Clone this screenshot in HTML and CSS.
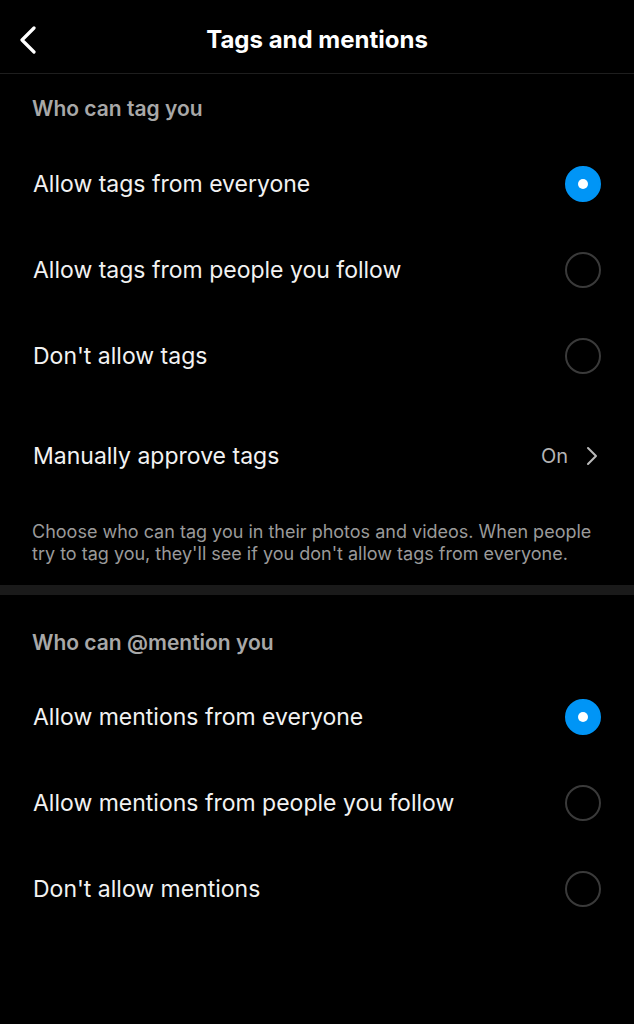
FILE: index.html
```html
<!DOCTYPE html>
<html>
<head>
<meta charset="utf-8">
<link rel="stylesheet" href="styles.css">
</head>
<body>
<div class="header">
  <svg class="back" width="20" height="28" viewBox="0 0 20 28"><path d="M16 2 L4 14 L16 26" fill="none" stroke="#fff" stroke-width="3.2" stroke-linecap="round" stroke-linejoin="round"/></svg>
  <div class="title">Tags and mentions</div>
</div>

<div class="section-title first">Who can tag you</div>
<div class="row"><span class="label">Allow tags from everyone</span><span class="radio on"></span></div>
<div class="row"><span class="label">Allow tags from people you follow</span><span class="radio"></span></div>
<div class="row"><span class="label">Don't allow tags</span><span class="radio"></span></div>
<div class="row manual"><span class="label">Manually approve tags</span><span class="value">On<svg class="chev" width="12" height="20" viewBox="0 0 12 20"><path d="M2 2 L10 10 L2 18" fill="none" stroke="#bbb" stroke-width="2" stroke-linecap="round" stroke-linejoin="round"/></svg></span></div>
<div class="desc">Choose who can tag you in their photos and videos. When people try to tag you, they'll see if you don't allow tags from everyone.</div>
<div class="divider"></div>

<div class="section-title second">Who can @mention you</div>
<div class="row"><span class="label">Allow mentions from everyone</span><span class="radio on"></span></div>
<div class="row"><span class="label">Allow mentions from people you follow</span><span class="radio"></span></div>
<div class="row"><span class="label">Don't allow mentions</span><span class="radio"></span></div>
</body>
</html>
```

FILE: styles.css
```css
html, body {
  margin: 0;
  padding: 0;
  background: #000;
  color: #f5f5f5;
  font-family: Inter, Roboto, "Liberation Sans", sans-serif;
}
.header {
  height: 73px;
  border-bottom: 1px solid #1e1e1e;
  display: flex;
  align-items: center;
  justify-content: center;
  position: relative;
}
.back {
  position: absolute;
  left: 18px;
  top: 26px;
}
.title {
  font-size: 24px;
  font-weight: 700;
  color: #fff;
  padding-top: 6px;
}
.section-title {
  font-size: 21px;
  font-weight: 600;
  color: #a8a8a8;
  line-height: 22px;
  padding: 0 32px;
}
.section-title.first {
  padding-top: 24px;
  padding-bottom: 21px;
}
.section-title.second {
  padding-top: 37px;
  padding-bottom: 20px;
}
.row {
  height: 86px;
  display: flex;
  align-items: center;
  justify-content: space-between;
  padding: 0 33px 0 33px;
}
.row.manual {
  margin-top: 14px;
  padding-right: 36px;
}
.label {
  font-size: 23px;
  color: #f2f2f2;
}
.radio {
  width: 32px;
  height: 32px;
  border: 2px solid #3a3a3a;
  border-radius: 50%;
  box-sizing: content-box;
  flex: none;
}
.radio.on {
  background: #0095f6;
  border-color: #0095f6;
  position: relative;
}
.radio.on::after {
  content: "";
  position: absolute;
  left: 11px;
  top: 11px;
  width: 10px;
  height: 10px;
  border-radius: 50%;
  background: #fff;
}
.value {
  display: flex;
  align-items: center;
  gap: 18px;
  font-size: 20px;
  color: #b5b5b5;
}
.desc {
  font-size: 18px;
  line-height: 22px;
  color: #9a9a9a;
  padding: 22px 24px 20px 32px;
}
.divider {
  height: 10px;
  background: #1a1a1a;
}
```
